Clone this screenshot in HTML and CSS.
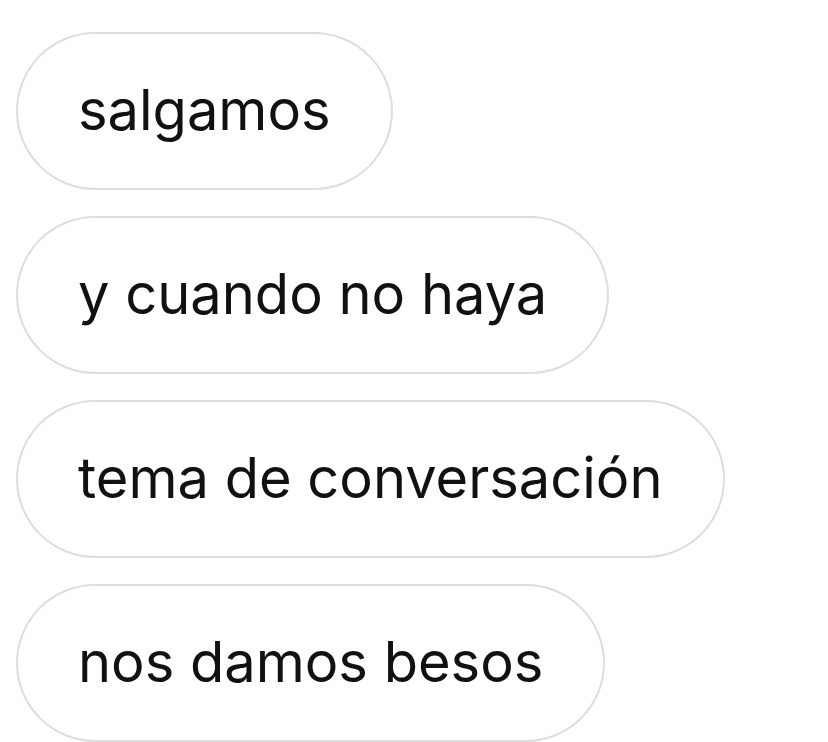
FILE: index.html
```html
<!DOCTYPE html>
<html lang="es">
<head>
    <meta charset="UTF-8">
    <meta name="viewport" content="width=device-width, initial-scale=1.0">
    <title>Mensajes</title>
    <link rel="stylesheet" href="styles.css">
</head>
<body>
    <main class="thread">
        <div class="bubble">salgamos</div>
        <div class="bubble">y cuando no haya</div>
        <div class="bubble">tema de conversación</div>
        <div class="bubble">nos damos besos</div>
    </main>
</body>
</html>
```

FILE: styles.css
```css
:root {
    --bg: #ffffff;
    --text: #111111;
    --bubble-border: #dddddd;
}

* {
    box-sizing: border-box;
}

body {
    margin: 0;
    padding: 0;
    background: var(--bg);
    color: var(--text);
    font-family: Inter, "Noto Sans", sans-serif;
    overflow: hidden;
}

.thread {
    display: flex;
    flex-direction: column;
    align-items: flex-start;
    gap: 26px;
    padding: 32px 0 0 16px;
}

.bubble {
    display: flex;
    align-items: center;
    height: 158px;
    padding: 0 60px 2px;
    border: 2px solid var(--bubble-border);
    border-radius: 79px;
    font-size: 56px;
    line-height: 1;
    white-space: nowrap;
}
```
